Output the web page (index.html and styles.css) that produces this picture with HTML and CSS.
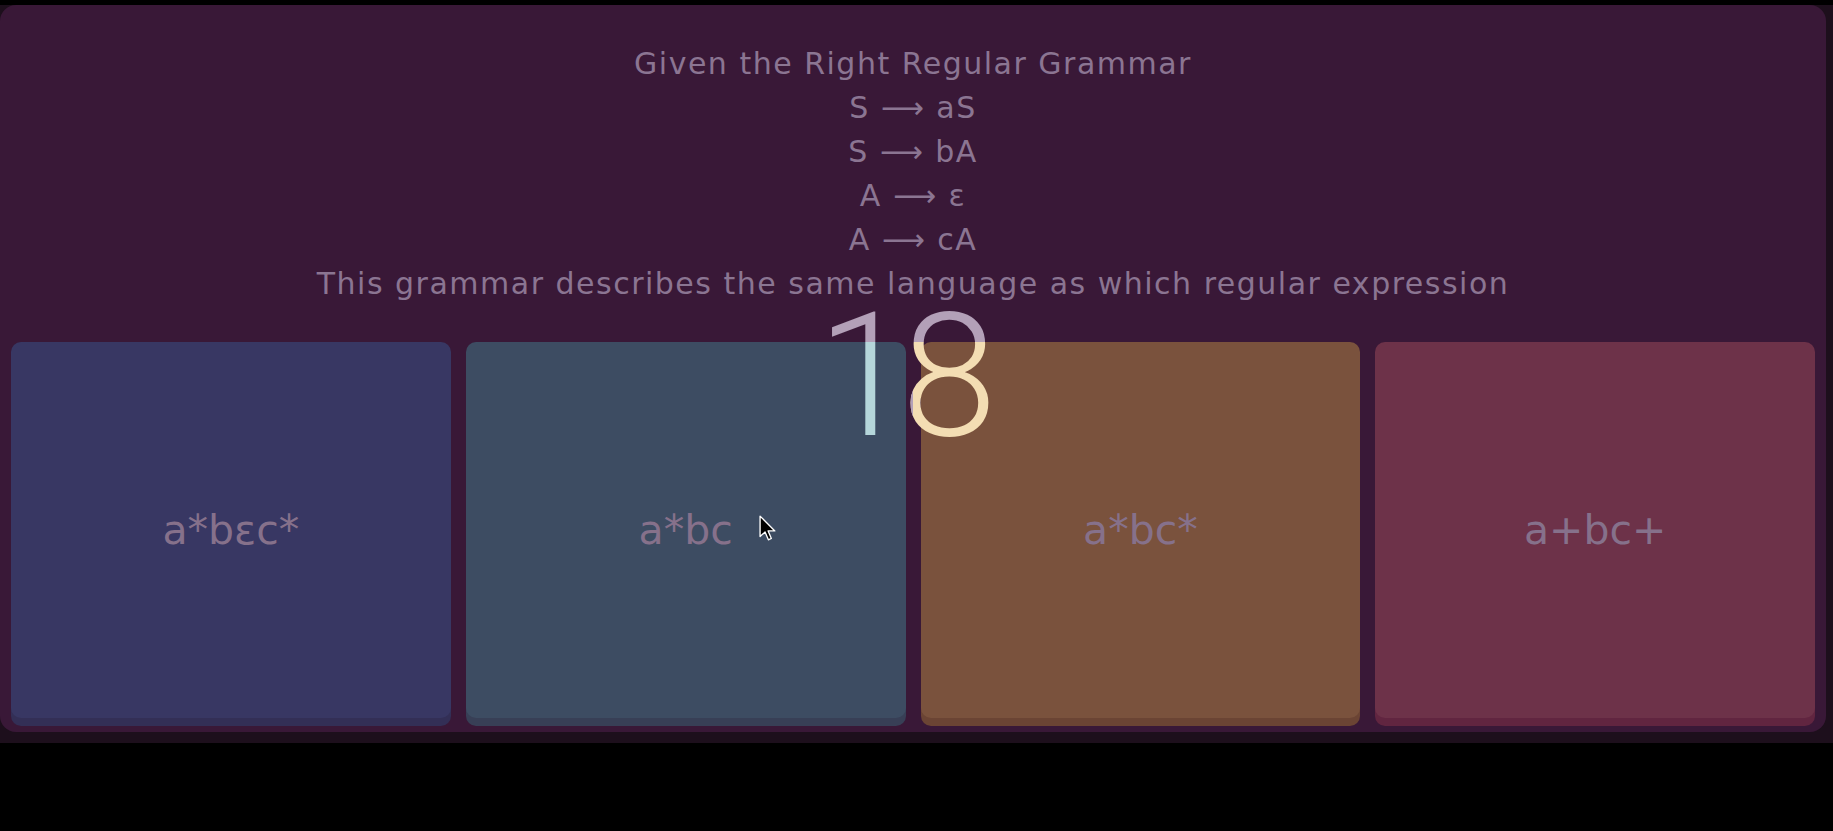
FILE: index.html
```html
<!DOCTYPE html>
<html lang="en">
<head>
<meta charset="utf-8">
<title>Quiz</title>
<link rel="stylesheet" href="styles.css">
</head>
<body>
  <div class="stage">
    <main class="panel">
      <div class="question">
        <p>Given the Right Regular Grammar</p>
        <p>S ⟶ aS</p>
        <p>S ⟶ bA</p>
        <p>A ⟶ ε</p>
        <p>A ⟶ cA</p>
        <p>This grammar describes the same language as which regular expression</p>
      </div>
      <div class="answers">
        <div class="answer blue"><span>a*bεc*</span></div>
        <div class="answer slate"><span>a*bc</span></div>
        <div class="answer brown"><span>a*bc*</span></div>
        <div class="answer wine"><span>a+bc+</span></div>
      </div>
    </main>
  </div>
  <div class="countdown"><span class="digit one">1</span><span class="digit eight">8</span></div>
  <svg class="cursor" width="18" height="27" viewBox="0 0 13.4 20"><path d="M0.8 0.8 L0.8 16 L4.5 12.6 L7 18.4 L9.2 17.4 L6.8 11.8 L11.8 11.8 Z" fill="#000" stroke="#fff" stroke-width="1" stroke-linejoin="round"/></svg>
</body>
</html>
```

FILE: styles.css
```css
html, body {
  margin: 0;
  padding: 0;
}
body {
  background: #000;
  padding-top: 5px;
  height: 826px;
  overflow: hidden;
  position: relative;
  font-family: "DejaVu Sans", "Lato", sans-serif;
}
.stage {
  background: #1d0f1c;
  height: 738px;
}
.panel {
  box-sizing: border-box;
  width: 1826px;
  height: 727px;
  background: #391837;
  border-radius: 16px;
  padding: 37px 11px 14px 11px;
  display: flex;
  flex-direction: column;
}
.question {
  text-align: center;
  color: #8b7592;
  font-size: 30px;
  line-height: 44px;
  letter-spacing: 1.5px;
}
.question p {
  margin: 0;
}
.answers {
  margin-top: 36px;
  display: grid;
  grid-template-columns: repeat(4, 1fr);
  column-gap: 15px;
  height: 376px;
}
.answer {
  border-radius: 10px;
  display: flex;
  align-items: center;
  justify-content: center;
  color: #86718b;
  font-size: 41px;
}
.blue { background: #383763; box-shadow: 0 8px 0 #332f56; }
.slate { background: #3d4c62; box-shadow: 0 8px 0 #383f56; }
.brown { background: #7a523d; box-shadow: 0 8px 0 #6b4434; }
.wine { background: #6d3249; box-shadow: 0 8px 0 #612540; }

.countdown {
  position: absolute;
  top: 290px;
  left: 817px;
  font-family: "Roboto", sans-serif;
  font-weight: 300;
  font-size: 172px;
  line-height: 1;
  white-space: nowrap;
}
.digit {
  display: inline-block;
  line-height: 1;
  color: transparent;
  -webkit-background-clip: text;
  background-clip: text;
}
.one {
  letter-spacing: -11px;
  background-image: linear-gradient(to bottom, #b3a0b8 0, #b3a0b8 52px, #b5d6da 52px, #b5d6da 100%);
}
.eight {
  background-image:
    linear-gradient(to right, #b3a0b8 0, #b3a0b8 12px, transparent 12px),
    linear-gradient(to bottom, #b3a0b8 0, #b3a0b8 52px, #f3ddb3 52px, #f3ddb3 100%);
}
.cursor {
  position: absolute;
  left: 759px;
  top: 515px;
}
```
